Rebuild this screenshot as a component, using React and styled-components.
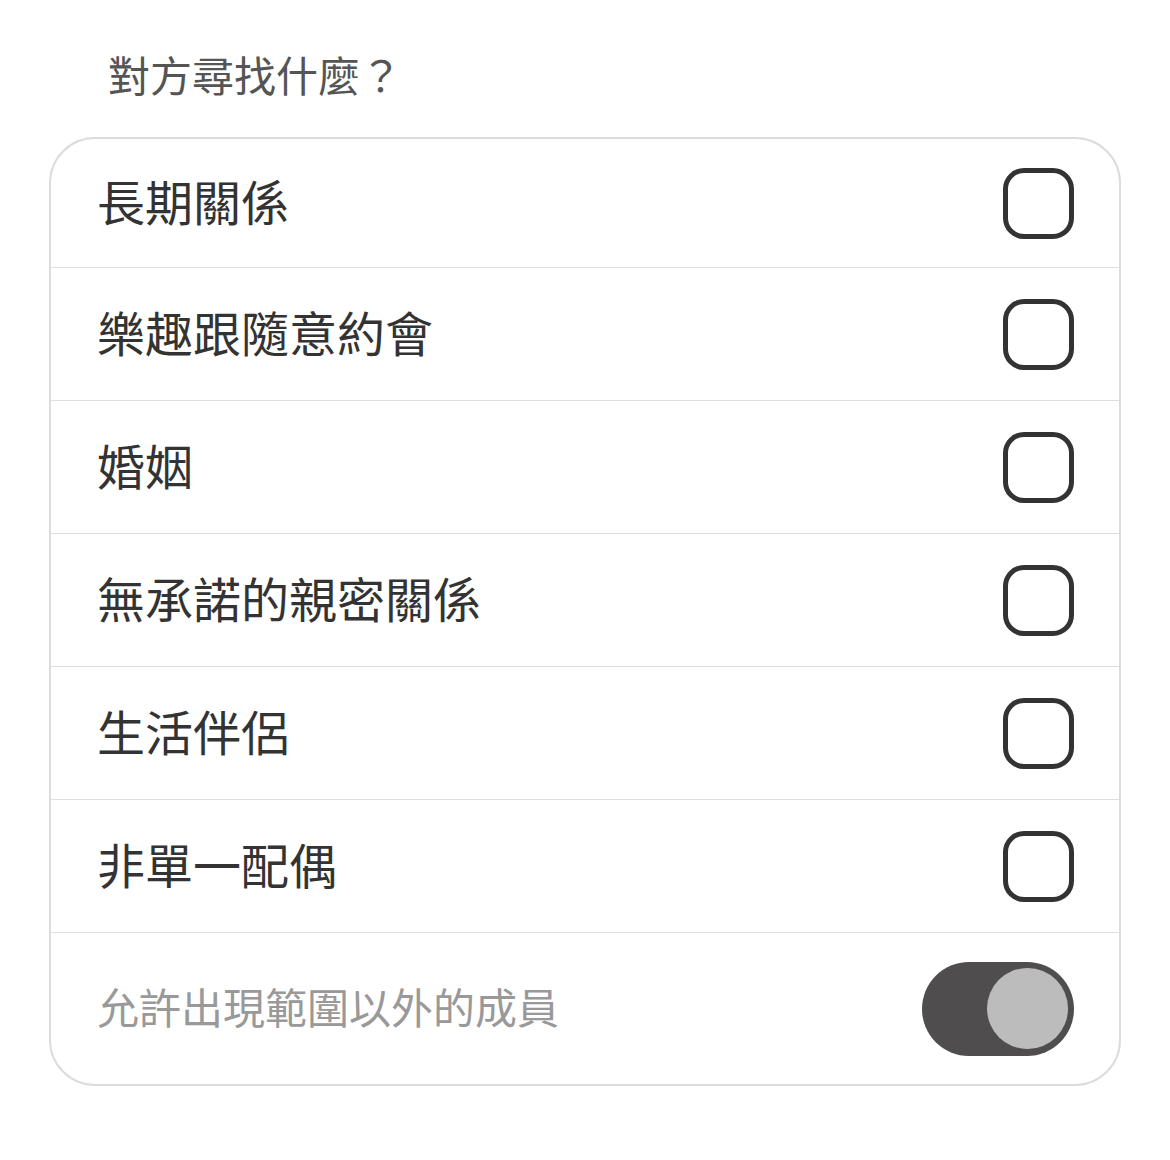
import React, { useState } from 'react'
import styled, { createGlobalStyle } from 'styled-components'

const GlobalStyle = createGlobalStyle`
body {
  margin: 0;
  background: #ffffff;
  font-family: "Noto Sans CJK TC", "Noto Sans", sans-serif;
}
`

const Page = styled.div`
  padding: 0 49px;
  width: 1170px;
  box-sizing: border-box;
`

const Title = styled.h2`
  margin: 49px 0 38px 59px;
  font-size: 42px;
  line-height: 50px;
  font-weight: 400;
  color: #555555;
`

const Card = styled.div`
  border: 2.5px solid #dcdcdc;
  border-radius: 46px;
  overflow: hidden;
  background: #ffffff;
`

const Row = styled.label`
  display: flex;
  align-items: center;
  justify-content: space-between;
  height: 132px;
  padding: 0 45px 0 46px;
  border-bottom: 1px solid #dedede;
  cursor: pointer;

  &:first-child {
    height: 128px;
  }
`

const FooterRow = styled(Row)`
  height: 151px;
  border-bottom: none;
`

const Label = styled.span`
  line-height: 1;
  padding-bottom: 6px;
  color: ${p => (p.muted ? '#999999' : '#333333')};
  font-size: ${p => (p.muted ? '42px' : '48px')};
`

const Box = styled.span`
  width: 71px;
  height: 71px;
  box-sizing: border-box;
  border: 5px solid #333333;
  border-radius: 21px;
  background: ${p => (p.checked ? '#333333' : '#ffffff')};
`

const Track = styled.span`
  position: relative;
  width: 152px;
  height: 94px;
  border-radius: 47px;
  background: ${p => (p.on ? '#4f4d4e' : '#cfcfcf')};
`

const Knob = styled.span`
  position: absolute;
  top: 6.5px;
  left: ${p => (p.on ? '65px' : '6px')};
  width: 81px;
  height: 81px;
  border-radius: 50%;
  background: #bcbcbc;
`

const options = [
  '長期關係',
  '樂趣跟隨意約會',
  '婚姻',
  '無承諾的親密關係',
  '生活伴侶',
  '非單一配偶',
]

export default function App() {
  const [checked, setChecked] = useState({})
  const [allow, setAllow] = useState(true)

  return (
    <Page>
      <GlobalStyle />
      <Title>對方尋找什麼？</Title>
      <Card>
        {options.map(o => (
          <Row key={o} onClick={() => setChecked({ ...checked, [o]: !checked[o] })}>
            <Label>{o}</Label>
            <Box checked={!!checked[o]} />
          </Row>
        ))}
        <FooterRow onClick={() => setAllow(!allow)}>
          <Label muted>允許出現範圍以外的成員</Label>
          <Track on={allow}>
            <Knob on={allow} />
          </Track>
        </FooterRow>
      </Card>
    </Page>
  )
}
